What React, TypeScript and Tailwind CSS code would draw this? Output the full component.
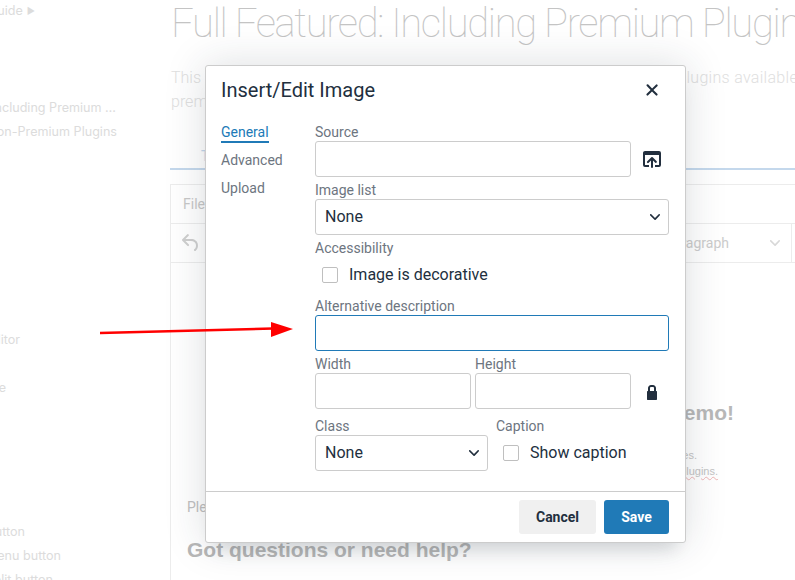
const closePath =
  "M17.3 8.2L13.4 12l3.9 3.8a1 1 0 0 1-1.5 1.5L12 13.4l-3.8 3.9a1 1 0 0 1-1.5-1.5l3.9-3.8-3.8-3.9a1 1 0 0 1 1.5-1.5l3.8 3.9 3.8-3.8a1 1 0 0 1 1.5 1.5z";
const browsePath =
  "M19 4a2 2 0 0 1 2 2v12a2 2 0 0 1-2 2h-4v-2h4V8H5v10h4v2H5a2 2 0 0 1-2-2V6c0-1.1.9-2 2-2h14zm-8 9.4l-2.3 2.3a1 1 0 1 1-1.4-1.4l4-4a1 1 0 0 1 1.4 0l4 4a1 1 0 0 1-1.4 1.4L13 13.4V20a1 1 0 0 1-2 0v-6.6z";
const lockPath =
  "M16.3 11c.2 0 .3 0 .5.2l.2.6v7.4c0 .3 0 .4-.2.6l-.6.2H7.8c-.3 0-.4 0-.6-.2a.7.7 0 0 1-.2-.6v-7.4c0-.3 0-.4.2-.6l.5-.2H8V8c0-.8.3-1.5.9-2.1.6-.6 1.3-.9 2.1-.9h2c.8 0 1.5.3 2.1.9.6.6.9 1.3.9 2.1v3h.3zM10 8v3h4V8a1 1 0 0 0-.3-.7A1 1 0 0 0 13 7h-2a1 1 0 0 0-.7.3 1 1 0 0 0-.3.7z";
const undoPath =
  "M6.4 8H12c3.7 0 6.2 2 6.8 5.1.6 2.7-.4 5.6-2.3 6.8a1 1 0 0 1-1-1.8c1.1-.6 1.8-2.7 1.4-4.6-.5-2.1-2.1-3.5-4.9-3.5H6.4l3.3 3.3a1 1 0 1 1-1.4 1.4l-5-5a1 1 0 0 1 0-1.4l5-5a1 1 0 0 1 1.4 1.4L6.4 8z";
const chevronPath =
  "M8.7 2.2c.3-.3.8-.3 1 0 .4.4.4.9 0 1.2L5.7 7.8c-.3.3-.9.3-1.2 0L.2 3.4a.8.8 0 0 1 0-1.2c.3-.3.8-.3 1.1 0L5 6l3.7-3.8z";

function Icon({ d, className }: { d: string; className?: string }) {
  return (
    <svg viewBox="0 0 24 24" className={className} fill="currentColor">
      <path d={d} />
    </svg>
  );
}

function Chevron({ className }: { className?: string }) {
  return (
    <svg viewBox="0 0 10 10" className={className} fill="currentColor">
      <path d={chevronPath} />
    </svg>
  );
}

function FieldLabel({ children }: { children: string }) {
  return <div className="h-[18px] text-sm leading-[18px] text-[#6d7580]">{children}</div>;
}

function TextBox({ className = "", focused = false }: { className?: string; focused?: boolean }) {
  return (
    <input
      className={`block h-9 rounded-[3px] border bg-white outline-none ${focused ? "border-[#207ab7]" : "border-[#cccccc]"} ${className}`}
    />
  );
}

function SelectBox({ className = "" }: { className?: string }) {
  return (
    <div
      className={`flex h-9 items-center justify-between rounded-[3px] border border-[#cccccc] bg-white pl-[9px] pr-[8px] text-base text-[#222f3e] ${className}`}
    >
      <span>None</span>
      <Chevron className="size-2.5" />
    </div>
  );
}

function CheckRow({ label, className = "" }: { label: string; className?: string }) {
  return (
    <label className={`flex items-center text-base text-[#222f3e] ${className}`}>
      <span className="size-4 rounded-[2px] border border-[#bfbfbf] bg-white" />
      <span className="ml-[11px]">{label}</span>
    </label>
  );
}

function SideItem({ text, end, className = "" }: { text: React.ReactNode; end: string; className?: string }) {
  return (
    <div className={`flex h-6 items-center justify-end whitespace-nowrap ${end} ${className}`}>
      {text}
    </div>
  );
}

function BackgroundPage() {
  return (
    <div className="flex h-full text-[#dcdcdc]">
      <aside className="w-[170px] shrink-0 font-['Inter',sans-serif] text-[12.6px]">
        <SideItem
          text={
            <>
              User Guide <span className="ml-1 text-[9px]">►</span>
            </>
          }
          end="w-[35px]"
          className="-mt-px"
        />
        <SideItem text="Full Featured: Including Premium …" end="w-[116px]" className="mt-[73px]" />
        <SideItem text="Full Featured: Non-Premium Plugins" end="w-[117px]" />
        <SideItem text="Classic Editor" end="w-[20px]" className="mt-[184px]" />
        <SideItem text="Inline Mode" end="w-[6px]" className="mt-6" />
        <SideItem text="Custom toolbar button" end="w-[25px]" className="mt-[120px]" />
        <SideItem text="Custom menu button" end="w-[61px]" />
        <SideItem text="Custom split button" end="w-[53px]" />
      </aside>

      <main className="min-w-0 flex-1">
        <h1 className="mt-[-1px] whitespace-nowrap pl-px font-['Roboto',sans-serif] text-[40px] leading-[50px] font-thin tracking-[-1.35px] text-[#c4c4c4]">
          Full Featured: Including Premium Plugins
        </h1>
        <div className="mt-[16px] pl-px font-['Roboto',sans-serif] text-base leading-[25px] font-light text-[#e0e0e0]">
          <div className="flex w-[627px] justify-between whitespace-nowrap">
            <span>This</span>
            <span className="tracking-[0.3px]">plugins available</span>
          </div>
          <div className="-mt-px">prem</div>
        </div>
        <div className="mt-[30px] h-6 pl-[31px] font-['Roboto',sans-serif] text-sm leading-6 text-[#c4d8ec]">T</div>
        <div className="h-[2px] bg-[#c4d8ec]" />

        <section className="mt-[14px] h-[396px] border-t border-l border-[#ececec] font-['Roboto',sans-serif]">
          <div className="flex h-[38px] items-center pl-3 text-sm text-[#c8c8c8]">File</div>
          <div className="flex h-[40px] items-center justify-between border-y border-[#ececec]">
            <Icon d={undoPath} className="ml-[8px] size-6 text-[#cfcfcf]" />
            <div className="flex h-full items-center text-sm text-[#cccccc]">
              <span>Paragraph</span>
              <Chevron className="ml-[41px] size-2.5 text-[#d8d8d8]" />
              <div className="ml-[11px] mr-[3px] h-full border-l border-[#ececec]" />
            </div>
          </div>
          <div className="mt-[136px] flex justify-end pr-[61px] font-['Liberation_Sans',sans-serif] text-[21px] leading-7 font-bold text-[#b8b8b8]">
            demo!
          </div>
          <div className="mt-[20px] flex justify-end pr-[98px] font-['Liberation_Sans',sans-serif] text-[11px] leading-4 text-[#c4c4c4]">
            features.
          </div>
          <div className="flex justify-end pr-[77px] font-['Liberation_Sans',sans-serif] text-[11px] leading-4 text-[#c4c4c4]">
            <span className="underline decoration-[#eeb5b5] decoration-wavy decoration-1">plugins.</span>
          </div>
          <div className="mt-[18px] pl-4 text-sm text-[#c0c0c0]">Please</div>
          <div className="mt-[19px] whitespace-nowrap pl-4 font-['Liberation_Sans',sans-serif] text-[21px] leading-7 font-bold text-[#b8b8b8]">
            Got questions or need help?
          </div>
        </section>
      </main>
    </div>
  );
}

function ImageDialog() {
  return (
    <div className="absolute top-[65px] left-[205px] flex h-[478px] w-[481px] flex-col rounded-[3px] border border-[#cccccc] bg-white font-['Roboto',sans-serif] shadow-[0_16px_16px_-10px_rgba(34,47,62,0.15),0_0_40px_1px_rgba(34,47,62,0.15)]">
      <header className="flex h-[57px] shrink-0 items-center justify-between pb-[10px] pl-[15px] pr-[21px]">
        <h2 className="text-xl leading-6 text-[#222f3e]">Insert/Edit Image</h2>
        <Icon d={closePath} className="size-6 text-[#222f3e]" />
      </header>

      <div className="flex min-h-0 flex-1 pl-[15px]">
        <nav className="w-[94px] shrink-0 text-sm text-[#6d7580]">
          <div className="h-[20px] w-12 border-b-2 border-[#207ab7] leading-[18px] text-[#207ab7]">General</div>
          <div className="mt-[7px] h-5 leading-5">Advanced</div>
          <div className="mt-[8px] h-5 leading-5">Upload</div>
        </nav>

        <form className="w-[354px] shrink-0">
          <FieldLabel>Source</FieldLabel>
          <div className="flex items-center">
            <TextBox className="w-[316px]" />
            <Icon d={browsePath} className="ml-[9px] size-6 text-[#222f3e]" />
          </div>

          <div className="mt-1">
            <FieldLabel>Image list</FieldLabel>
            <SelectBox className="w-[354px]" />
          </div>

          <div className="mt-1">
            <FieldLabel>Accessibility</FieldLabel>
            <CheckRow label="Image is decorative" className="mt-[10px] h-4 pl-[7px]" />
          </div>

          <div className="mt-[14px]">
            <FieldLabel>Alternative description</FieldLabel>
            <TextBox className="w-[354px]" focused />
          </div>

          <div className="mt-1 flex items-end gap-1">
            <div>
              <FieldLabel>Width</FieldLabel>
              <TextBox className="w-[156px]" />
            </div>
            <div>
              <FieldLabel>Height</FieldLabel>
              <TextBox className="w-[156px]" />
            </div>
            <Icon d={lockPath} className="mb-[5px] ml-[5px] size-6 text-[#222f3e]" />
          </div>

          <div className="mt-2 flex gap-2">
            <div>
              <FieldLabel>Class</FieldLabel>
              <SelectBox className="w-[173px]" />
            </div>
            <div>
              <FieldLabel>Caption</FieldLabel>
              <CheckRow label="Show caption" className="mt-[10px] h-4 pl-[7px]" />
            </div>
          </div>
        </form>
      </div>

      <footer className="flex h-[51px] shrink-0 items-center justify-end gap-2 border-t border-[#cccccc] pr-4">
        <button className="h-[34px] w-[77px] rounded-[3px] bg-[#f0f0f0] text-sm font-bold text-[#222f3e]">Cancel</button>
        <button className="h-[34px] w-[65px] rounded-[3px] bg-[#207ab7] text-sm font-bold text-white">Save</button>
      </footer>
    </div>
  );
}

function RedArrow() {
  return (
    <svg className="absolute top-[318px] left-[98px]" width="200" height="22" viewBox="0 0 200 22">
      <path d="M2 15 L175 10.6" stroke="#ff0000" strokeWidth="2.5" fill="none" />
      <path d="M173 4 L195 11 L173 19 Z" fill="#ff0000" />
    </svg>
  );
}

export default function App() {
  return (
    <div className="relative h-[580px] w-[795px] overflow-hidden bg-white">
      <BackgroundPage />
      <ImageDialog />
      <RedArrow />
    </div>
  );
}
